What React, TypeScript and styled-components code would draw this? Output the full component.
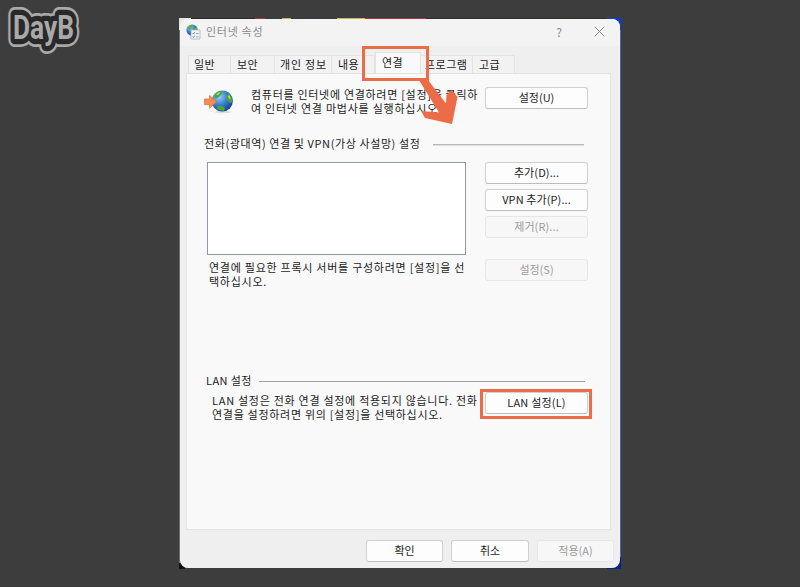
import React from "react";
import styled, { createGlobalStyle } from "styled-components";

const Global = createGlobalStyle`
  * { box-sizing: border-box; }
  body { margin: 0; background: #3e3d3d; overflow: hidden; }
  button { font: inherit; padding: 0; }
`;

const Page = styled.main`
  position: relative;
  width: 800px;
  height: 587px;
  padding: 18px 0 0 179px;
  background: #3e3d3d;
  font-family: "Noto Sans CJK KR", sans-serif;
  font-size: 11px;
  color: #1c1c1c;
`;

const Logo = styled.svg`
  position: absolute;
  left: 0;
  top: 0;
`;

/* Sliver of the desktop that shows behind the rounded dialog corners. */
const Desktop = styled.div`
  width: 442px;
  height: 551px;
  padding: 1px;
  background:
    linear-gradient(#0c3be0, #0c3be0) 100% 0 / 14px 12px no-repeat,
    linear-gradient(#06208c, #06208c) 100% 100% / 14px 12px no-repeat,
    linear-gradient(#4a69b4, #4a69b4) 100% 0 / 1px 100% no-repeat,
    linear-gradient(#e4e4e4, #e4e4e4) 0 0 / 12px 12px no-repeat,
    linear-gradient(#101010, #101010) 0 100% / 6px 6px no-repeat,
    linear-gradient(#3e3d3d, #3e3d3d) 0 100% / 100% 1px no-repeat,
    linear-gradient(90deg, #2a2a2a 0 76px, #a92f3c 76px 86px, #35404a 86px 103px, #c9b94f 103px 112px, #3a3a46 112px 158px, #c9b94f 158px 186px, #b3323d 186px 247px, #303030 247px) 0 0 / 100% 1px no-repeat,
    #6e6e6e;
`;

const Dialog = styled.section`
  display: flex;
  flex-direction: column;
  width: 440px;
  height: 549px;
  border-radius: 8px;
  overflow: hidden;
  background: #efefef;
`;

const TitleBar = styled.header`
  display: flex;
  align-items: center;
  gap: 5px;
  height: 27px;
  flex: none;
  padding: 0 15px 2px 6px;
  background: #f3f3f3;
  color: #8b8b8b;
`;

const TitleButtons = styled.div`
  display: flex;
  align-items: center;
  gap: 32px;
  margin-left: auto;
`;

const Label = styled.span<{ $spacing?: number; $size?: number }>`
  display: block;
  white-space: pre;
  font-size: ${(p) => p.$size ?? 11}px;
  line-height: 13.5px;
  letter-spacing: ${(p) => p.$spacing ?? 0}px;
`;

const TabStrip = styled.nav`
  display: flex;
  align-items: flex-end;
  height: 27px;
  flex: none;
  padding-left: 8px;
`;

const Tab = styled.div<{ $width: number; $pad: number; $active?: boolean }>`
  width: ${(p) => p.$width}px;
  height: ${(p) => (p.$active ? 21 : 18)}px;
  padding: ${(p) => (p.$active ? 3 : 2)}px 0 0 ${(p) => p.$pad}px;
  border: 1px solid #e3e3e3;
  border-bottom: 0;
  border-left-width: ${(p) => (p.$active ? 1 : 0)}px;
  background: ${(p) => (p.$active ? "#f9f9f9" : "#f2f2f2")};
  &:first-child { border-left-width: 1px; }
`;

const Panel = styled.div`
  width: 425px;
  height: 457px;
  margin-left: 6px;
  flex: none;
  border: 1px solid #e3e3e3;
  background: #f9f9f9;
`;

const IntroRow = styled.div`
  display: flex;
  height: 62px;
  padding: 13px 0 0 17px;
`;

const IntroText = styled.div`
  width: 234px;
  margin: 1px 0 0 17px;
`;

const SectionHead = styled.div<{ $left: number; $gap: number; $line: number; $dark?: boolean }>`
  display: flex;
  align-items: center;
  height: 16px;
  gap: ${(p) => p.$gap}px;
  padding-left: ${(p) => p.$left}px;
  &::after {
    content: "";
    width: ${(p) => p.$line}px;
    height: 1px;
    background: ${(p) => (p.$dark ? "#a0a0a0" : "#b8b8b8")};
    box-shadow: ${(p) => (p.$dark ? "none" : "0 1px 0 #dedede")};
  }
`;

const DialUpRow = styled.div`
  display: flex;
  gap: 19px;
  height: 221px;
  padding: 10px 0 0 20px;
`;

const DialUpColumn = styled.div`
  width: 259px;
`;

const ConnectionList = styled.div`
  height: 93px;
  margin-bottom: 6px;
  border: 1px solid #9298a0;
  background: #fff;
`;

const Note = styled.div`
  padding-left: 2px;
`;

const ButtonColumn = styled.div`
  display: flex;
  flex-direction: column;
  gap: 5px;
`;

const Button = styled.button<{ $width?: number; $top?: number }>`
  display: flex;
  align-items: center;
  justify-content: center;
  width: ${(p) => p.$width ?? 103}px;
  height: 22px;
  margin-top: ${(p) => p.$top ?? 0}px;
  flex: none;
  border: 1px solid #d0d0d0;
  border-bottom-color: #bdbdbd;
  border-radius: 3px;
  background: #fdfdfd;
  color: #1c1c1c;
  &:disabled {
    border-color: #e6e6e6;
    background: #f7f7f7;
    color: #9b9b9b;
  }
`;

const LanRow = styled.div`
  display: flex;
  padding: 3px 0 0 25px;
`;

const LanText = styled.div`
  width: 273px;
  padding-top: 2px;
`;

const Footer = styled.footer`
  display: flex;
  justify-content: flex-end;
  gap: 8px;
  padding: 10px 6px 0 0;
`;

const Highlight = styled.div<{ $x: number; $y: number; $w: number; $h: number }>`
  position: absolute;
  left: ${(p) => p.$x}px;
  top: ${(p) => p.$y}px;
  width: ${(p) => p.$w}px;
  height: ${(p) => p.$h}px;
  border: 3px solid #ec6c47;
`;

const Arrow = styled.svg`
  position: absolute;
  left: 410px;
  top: 74px;
`;

const GlobeDefs = () => (
  <defs>
    <radialGradient id="sea" cx="0.35" cy="0.3" r="0.75">
      <stop offset="0" stopColor="#9fd0f6" />
      <stop offset="0.5" stopColor="#3a80d2" />
      <stop offset="1" stopColor="#173c94" />
    </radialGradient>
  </defs>
);

const TitleIcon = () => (
  <svg width="15" height="16" viewBox="0 0 15 16">
    <GlobeDefs />
    <circle cx="6" cy="6" r="5.6" fill="url(#sea)" />
    <path d="M2 3q3-3 5-2l-1 3-3 2zM7 5l4-2q1 3-1 6l-3-1z" fill="#58b04a" />
    <path d="M5 6h9v9H5z" fill="#f4f7fa" stroke="#a7b2bd" strokeWidth=".8" />
    <path d="M6.5 9l1 1 1.2-2M6.5 12.5l1 1 1.2-2" fill="none" stroke="#3c80bd" strokeWidth=".8" />
    <path d="M9.8 9.5h3M9.8 12.8h3" stroke="#9aa5b0" />
  </svg>
);

const GlobeIcon = () => (
  <svg width="30" height="28" viewBox="0 0 30 28">
    <ellipse cx="19" cy="25" rx="8" ry="1.3" fill="#d8dbdf" />
    <circle cx="18.3" cy="14" r="10.6" fill="url(#sea)" />
    <path d="M10.5 8.500q2-4 6-4.500l2 1-2 3.500-3 2.500-3 0zM23 8l2-1.500q3.500 4 3.300 8.500l-2.300 1-3-3-1-3zM13.500 19l4-.5 3.500 2.500-1 3q-4 .5-7.500-3z" fill="#46a83a" />
    <path d="M12 8q2-3 4.500-3l-2 3zM24 9l1.500-.8 1.300 3.500-1.800 0z" fill="#a8dd6a" />
    <path d="M.6 12h5V8.500l7 6.300-7 6.300v-3.500h-5z" fill="#f58d51" stroke="#e07038" strokeWidth=".8" />
  </svg>
);

const TABS = [
  { text: "일반", width: 43, pad: 5, spacing: 0.5 },
  { text: "보안", width: 44, pad: 6, spacing: 0.5 },
  { text: "개인 정보", width: 57, pad: 5, spacing: 0.8 },
  { text: "내용", width: 43, pad: 6, spacing: 0.3 },
  { text: "연결", width: 46, pad: 6, spacing: 0.5, active: true },
  { text: "프로그램", width: 52, pad: 4, spacing: 0.5 },
  { text: "고급", width: 42, pad: 6, spacing: 0.5 },
];

export default function App() {
  return (
    <>
      <Global />
      <Page>
        <Logo width="90" height="60" viewBox="0 0 90 60">
          <g fontFamily="Roboto, sans-serif" fontWeight="700" fontSize="33" strokeLinejoin="round">
            <text x="13" y="39" textLength="61" lengthAdjust="spacingAndGlyphs" fill="#a9a9a9" stroke="#a9a9a9" strokeWidth="16">DayB</text>
            <text x="13" y="39" textLength="61" lengthAdjust="spacingAndGlyphs" fill="#292929" stroke="#292929" strokeWidth="10.500">DayB</text>
            <text x="13" y="39" textLength="61" lengthAdjust="spacingAndGlyphs" fill="#a9a9a9">DayB</text>
          </g>
        </Logo>
        <Desktop>
          <Dialog>
            <TitleBar>
              <TitleIcon />
              <Label $spacing={0.7}>인터넷 속성</Label>
              <TitleButtons>
                <Label $size={12}>?</Label>
                <svg width="11" height="11" viewBox="0 0 11 11">
                  <path d="M.7.7l9.6 9.6M10.3.7L.7 10.3" stroke="#8b8b8b" />
                </svg>
              </TitleButtons>
            </TitleBar>
            <TabStrip>
              {TABS.map((t) => (
                <Tab key={t.text} $width={t.width} $pad={t.pad} $active={t.active}>
                  <Label $spacing={t.spacing}>{t.text}</Label>
                </Tab>
              ))}
            </TabStrip>
            <Panel>
              <IntroRow>
                <GlobeIcon />
                <IntroText>
                  <Label $spacing={0.7}>컴퓨터를 인터넷에 연결하려면 [설정]을 클릭하</Label>
                  <Label $spacing={0.76}>여 인터넷 연결 마법사를 실행하십시오.</Label>
                </IntroText>
                <Button><Label>설정(U)</Label></Button>
              </IntroRow>
              <SectionHead $left={17} $gap={13} $line={151}>
                <Label $spacing={0.6}>전화(광대역) 연결 및 VPN(가상 사설망) 설정</Label>
              </SectionHead>
              <DialUpRow>
                <DialUpColumn>
                  <ConnectionList />
                  <Note>
                    <Label $spacing={0.74}>연결에 필요한 프록시 서버를 구성하려면 [설정]을 선</Label>
                    <Label $spacing={0.74}>택하십시오.</Label>
                  </Note>
                </DialUpColumn>
                <ButtonColumn>
                  <Button><Label $spacing={0.1}>추가(D)...</Label></Button>
                  <Button><Label $spacing={0.1}>VPN 추가(P)...</Label></Button>
                  <Button disabled><Label $spacing={0.1}>제거(R)...</Label></Button>
                  <Button disabled $top={16}><Label>설정(S)</Label></Button>
                </ButtonColumn>
              </DialUpRow>
              <SectionHead $left={19} $gap={7} $line={326} $dark>
                <Label $spacing={0.4}>LAN 설정</Label>
              </SectionHead>
              <LanRow>
                <LanText>
                  <Label $spacing={0.72}>LAN 설정은 전화 연결 설정에 적용되지 않습니다. 전화</Label>
                  <Label $spacing={0.7}>연결을 설정하려면 위의 [설정]을 선택하십시오.</Label>
                </LanText>
                <Button><Label $spacing={0.2}>LAN 설정(L)</Label></Button>
              </LanRow>
            </Panel>
            <Footer>
              <Button $width={77}><Label>확인</Label></Button>
              <Button $width={78}><Label>취소</Label></Button>
              <Button $width={77} disabled><Label>적용(A)</Label></Button>
            </Footer>
          </Dialog>
        </Desktop>
        <Highlight $x={362} $y={46} $w={67} $h={35} />
        <Highlight $x={480} $y={389} $w={112} $h={30} />
        <Arrow width="56" height="54" viewBox="0 0 56 54">
          <path d="M9 6H18L36 29.500L36.500 21L42 16L47.500 23L42 50L15 44L11 37L29 38.500Z" fill="#ec6c47" />
        </Arrow>
      </Page>
    </>
  );
}
